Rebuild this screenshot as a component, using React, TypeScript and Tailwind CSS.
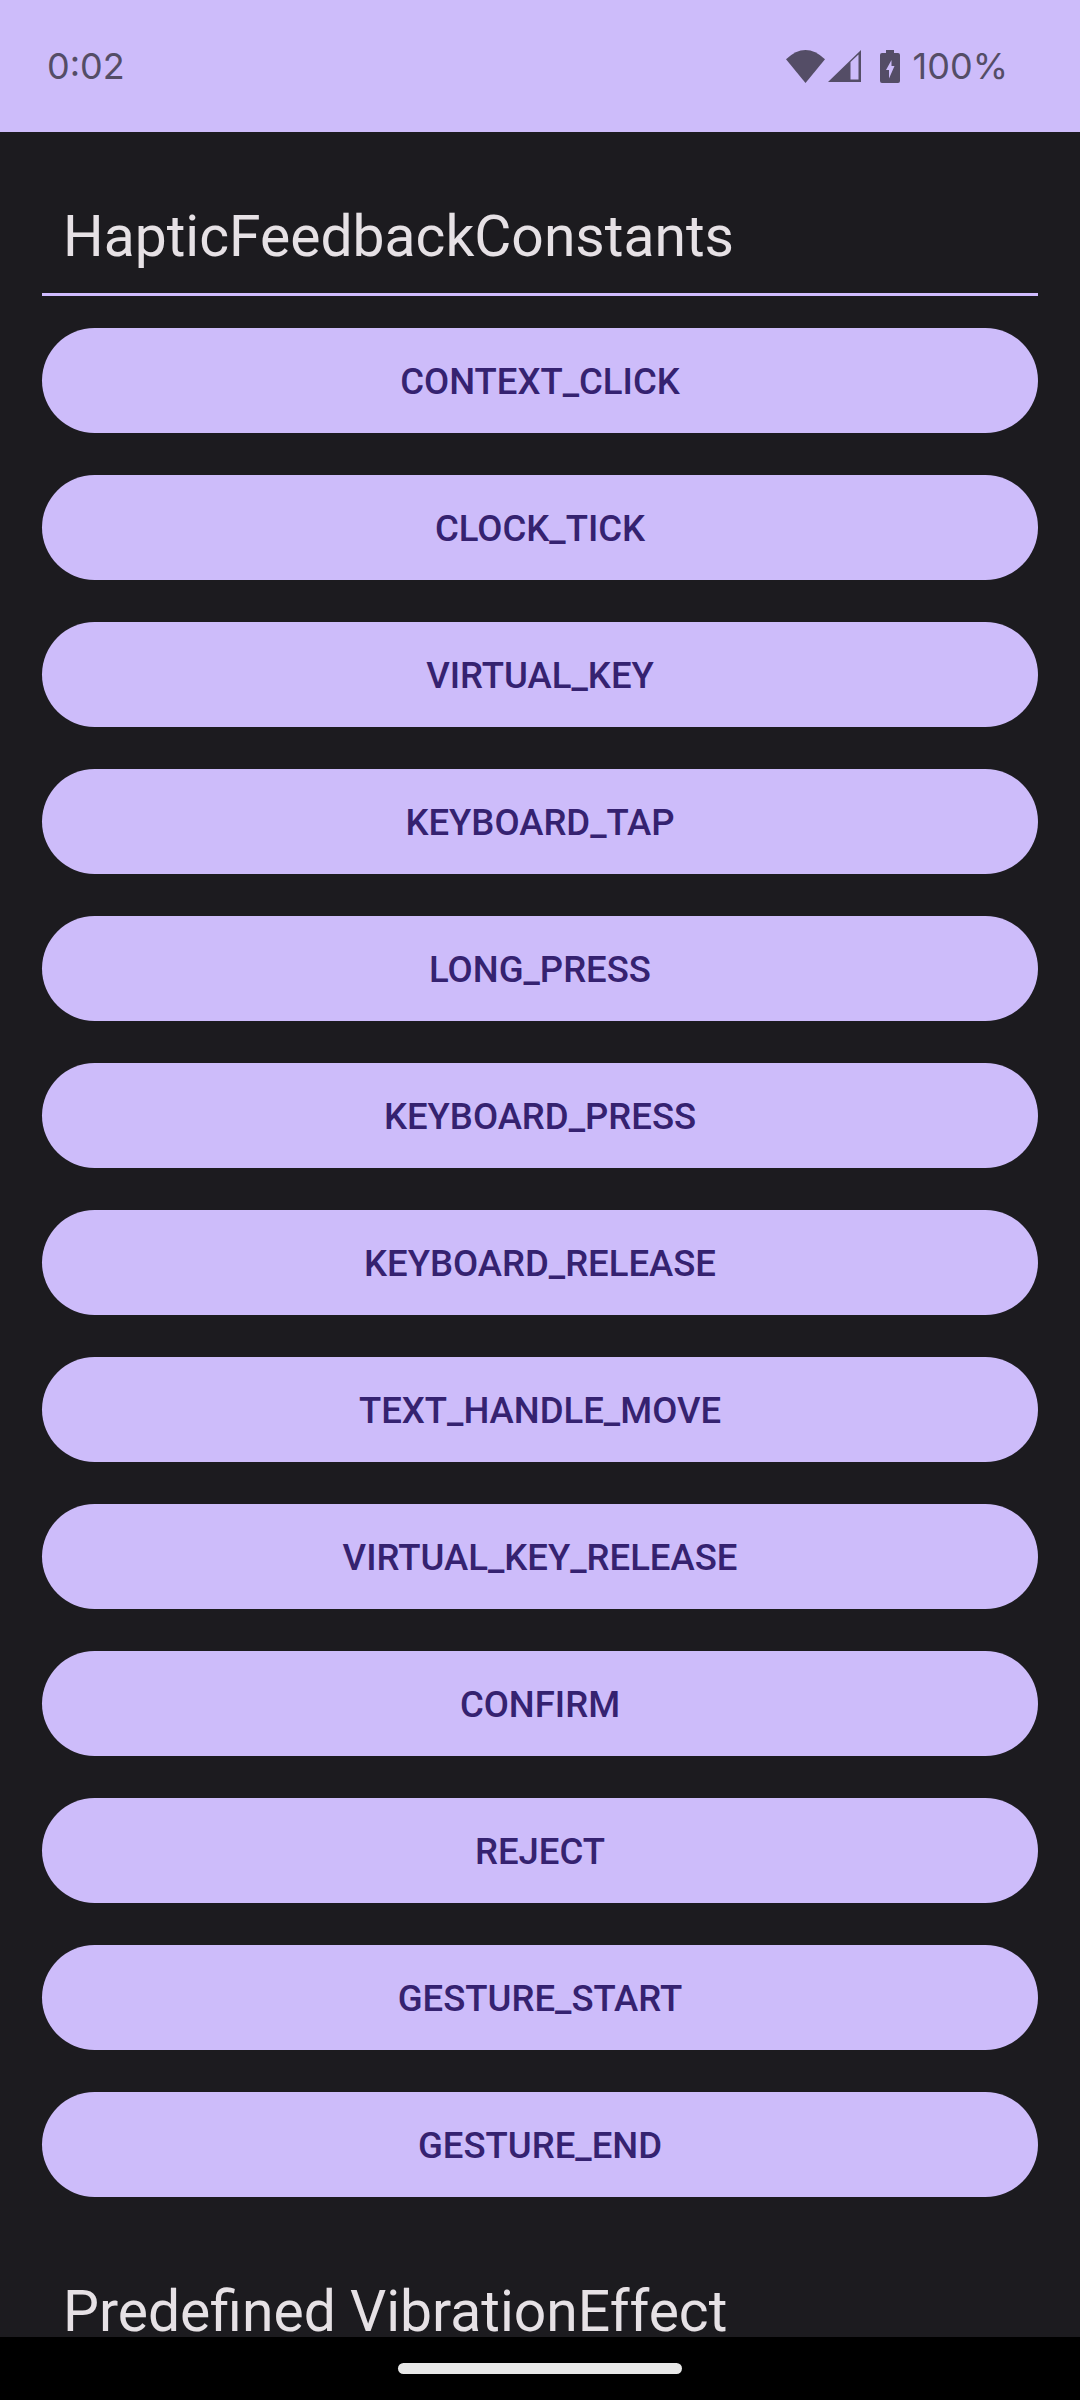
const labels = [
  "CONTEXT_CLICK",
  "CLOCK_TICK",
  "VIRTUAL_KEY",
  "KEYBOARD_TAP",
  "LONG_PRESS",
  "KEYBOARD_PRESS",
  "KEYBOARD_RELEASE",
  "TEXT_HANDLE_MOVE",
  "VIRTUAL_KEY_RELEASE",
  "CONFIRM",
  "REJECT",
  "GESTURE_START",
  "GESTURE_END",
];

function StatusIcons() {
  return (
    <div className="flex items-center text-[#544d66]">
      <svg width="39" height="33" viewBox="0 0 39 33" fill="currentColor">
        <path d="M0 9.3Q19.5-9.3 39 9.3L19.5 33Z" />
      </svg>
      <svg className="ml-[3px]" width="33" height="32" viewBox="0 0 33 32" fill="currentColor" fillRule="evenodd">
        <path d="M33 0V32H0ZM22.5 12V29.5H30.5V4.5Z" />
      </svg>
      <svg className="ml-[19px]" width="20" height="33" viewBox="0 0 20 33" fill="currentColor" fillRule="evenodd">
        <path d="M6 0H14V3H18Q20 3 20 5V31Q20 33 18 33H2Q0 33 0 31V5Q0 3 2 3H6ZM11.5 10L6 20H9V28.5L14.5 16H11.5Z" />
      </svg>
      <span className="ml-[13px] text-[36px] leading-none font-['Inter',sans-serif]">100%</span>
    </div>
  );
}

export default function App() {
  return (
    <div className="flex h-[2400px] w-[1080px] flex-col overflow-hidden bg-[#1c1b1f] font-['Roboto',sans-serif]">
      <header className="flex h-[132px] shrink-0 items-center justify-between bg-[#cdbcfa] pl-[47px] pr-[72px]">
        <span className="text-[36px] leading-none text-[#544d66] font-['Inter',sans-serif]">0:02</span>
        <StatusIcons />
      </header>
      <main className="min-h-0 flex-1 overflow-hidden px-[42px]">
        <h2 className="mt-[65px] pb-[17px] pl-[21px] text-[57px] leading-[79px] text-[#e6e1e5]">HapticFeedbackConstants</h2>
        <div className="h-[3px] bg-[#d0bcff]" />
        <div className="mt-[32px] flex flex-col gap-[42px]">
          {labels.map((label) => (
            <button
              key={label}
              className="flex h-[105px] items-center justify-center rounded-full bg-[#cdbcfa] pt-[4px] text-[36.5px] font-medium text-[#352270]"
            >
              {label}
            </button>
          ))}
        </div>
        <h2 className="mt-[75px] pl-[21px] text-[57px] leading-[79px] text-[#e6e1e5]">Predefined VibrationEffect</h2>
      </main>
      <footer className="flex h-[63px] shrink-0 justify-center bg-black pt-[26px]">
        <div className="h-[11px] w-[284px] rounded-full bg-[#e8e8e8]" />
      </footer>
    </div>
  );
}
